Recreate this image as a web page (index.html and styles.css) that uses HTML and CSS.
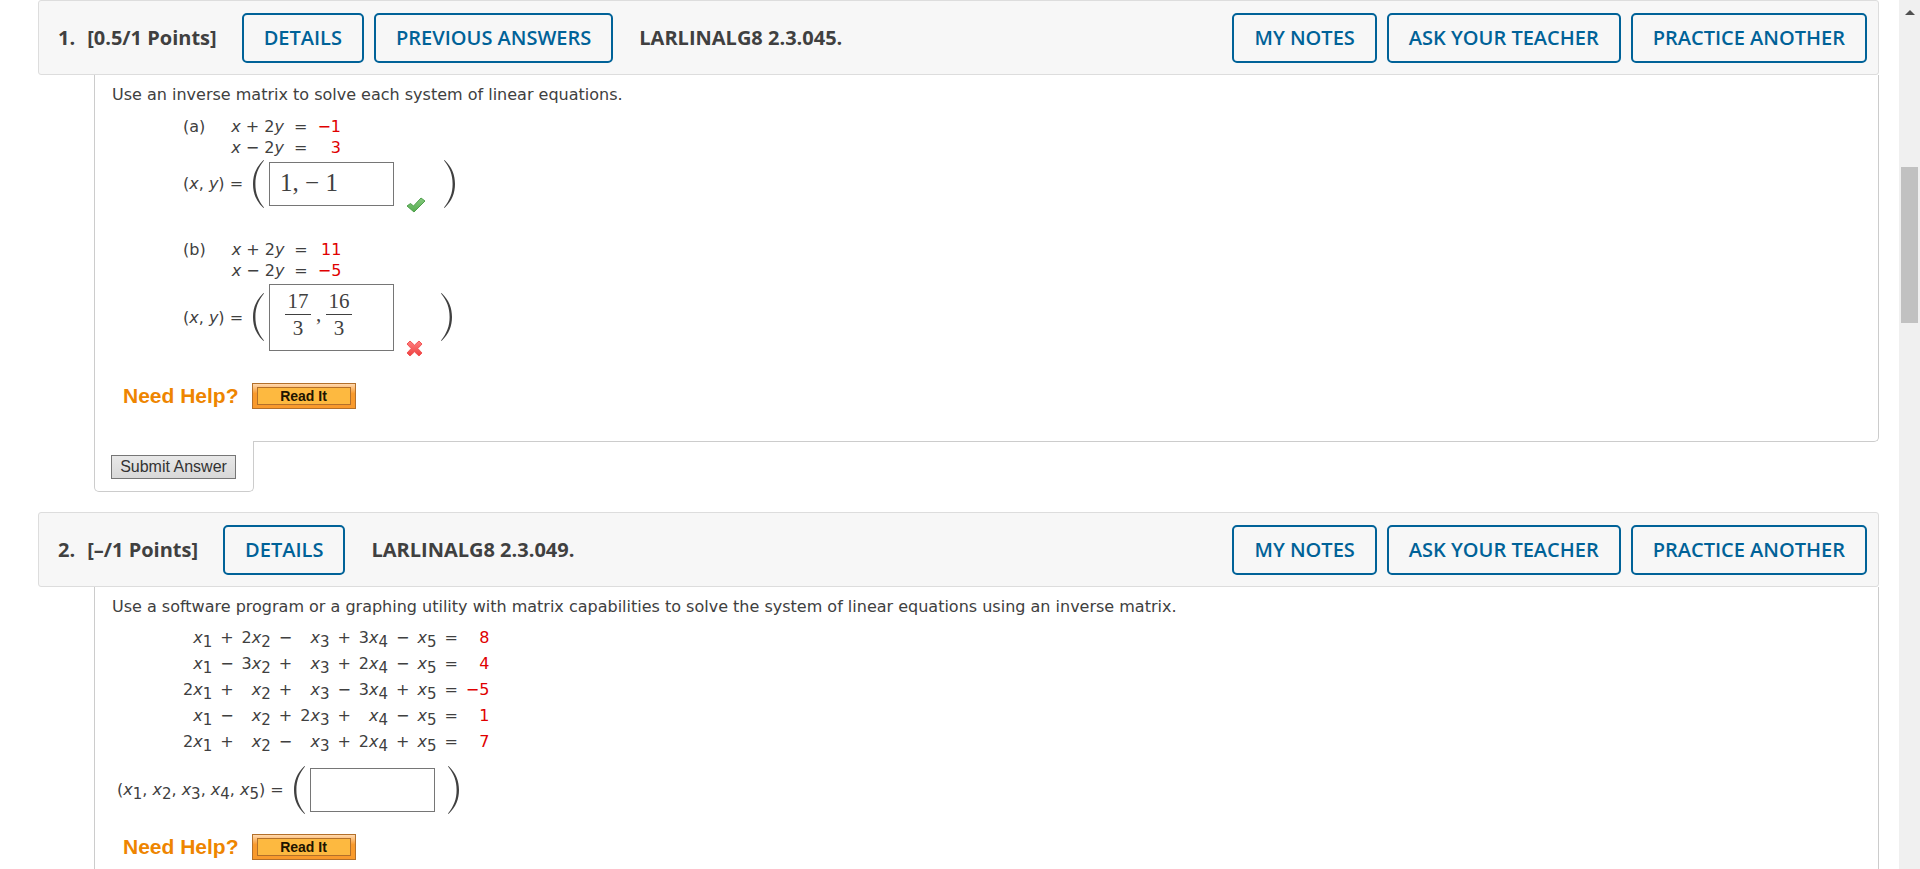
FILE: index.html
```html
<!DOCTYPE html>
<html lang="en">
  <head>
    <meta charset="UTF-8" />
    <meta name="viewport" content="width=device-width, initial-scale=1.0" />
    <title>Assignment</title>
    <link rel="stylesheet" href="styles.css">
  </head>
  <body>
    <svg class="defs" width="0" height="0" aria-hidden="true">
      <defs>
        <symbol id="paren" viewBox="0 0 11 48">
          <path d="M10.5 0C3 7 0 15 0 24s3 17 10.5 24l.5-.6C5 40 2.400 33 2.400 24S5 8 11 .6z" fill="#404040" />
        </symbol>
        <linearGradient id="green" x1="0" y1="0" x2="0" y2="1">
          <stop offset="0" stop-color="#86c97e" />
          <stop offset="1" stop-color="#55ad50" />
        </linearGradient>
        <linearGradient id="red" x1="0" y1="0" x2="0" y2="1">
          <stop offset="0" stop-color="#ff8080" />
          <stop offset="1" stop-color="#ee4040" />
        </linearGradient>
      </defs>
    </svg>

    <div class="page">
      <main class="content">

        <section class="question">
          <header class="bar">
            <h2 class="number">1.</h2>
            <span class="points">[0.5/1 Points]</span>
            <button class="btn" type="button">DETAILS</button>
            <button class="btn" type="button">PREVIOUS ANSWERS</button>
            <span class="code">LARLINALG8 2.3.045.</span>
            <div class="tools">
              <button class="btn" type="button">MY NOTES</button>
              <button class="btn" type="button">ASK YOUR TEACHER</button>
              <button class="btn" type="button">PRACTICE ANOTHER</button>
            </div>
          </header>

          <div class="body">
            <p class="prompt">Use an inverse matrix to solve each system of linear equations.</p>

            <div class="part">
              <div class="given">
                <span>(a)</span>
                <table class="system">
                  <tr><td><i>x</i> + 2<i>y</i></td><td>=</td><td class="val">−1</td></tr>
                  <tr><td><i>x</i> − 2<i>y</i></td><td>=</td><td class="val">3</td></tr>
                </table>
              </div>
              <div class="answer">
                <label for="ans-a">(<i>x</i>, <i>y</i>) =</label>
                <svg class="paren"><use href="#paren" /></svg>
                <input class="field" id="ans-a" type="text" value="1, − 1">
                <svg class="mark" viewBox="0 0 20 16" role="img" aria-label="Correct">
                  <path d="M1 9 4.500 6.500 7.500 9 15 1 19 4 8 15z" fill="url(#green)" stroke="#4f9f4c" stroke-width="1" stroke-linejoin="round" />
                </svg>
                <svg class="paren close"><use href="#paren" /></svg>
              </div>
            </div>

            <div class="part">
              <div class="given">
                <span>(b)</span>
                <table class="system">
                  <tr><td><i>x</i> + 2<i>y</i></td><td>=</td><td class="val">11</td></tr>
                  <tr><td><i>x</i> − 2<i>y</i></td><td>=</td><td class="val">−5</td></tr>
                </table>
              </div>
              <div class="answer tall">
                <span id="lbl-b">(<i>x</i>, <i>y</i>) =</span>
                <svg class="paren"><use href="#paren" /></svg>
                <div class="field math" role="textbox" tabindex="0" contenteditable="true" aria-labelledby="lbl-b">
                  <span class="frac"><span>17</span><span>3</span></span>
                  <span class="comma">,</span>
                  <span class="frac"><span>16</span><span>3</span></span>
                </div>
                <svg class="mark wrong" viewBox="0 0 17 17" role="img" aria-label="Incorrect">
                  <path d="M4 1 8.500 5.200 13 1 16 4 11.800 8.500 16 13 13 16 8.500 11.800 4 16 1 13 5.200 8.500 1 4z" fill="url(#red)" stroke="#f25555" stroke-width="1" stroke-linejoin="round" />
                </svg>
                <svg class="paren close"><use href="#paren" /></svg>
              </div>
            </div>

            <div class="help">
              <strong>Need Help?</strong>
              <button class="read" type="button"><span>Read It</span></button>
            </div>
          </div>
          <div class="submit">
            <button type="button">Submit Answer</button>
          </div>
        </section>

        <section class="question">
          <header class="bar">
            <h2 class="number">2.</h2>
            <span class="points">[–/1 Points]</span>
            <button class="btn" type="button">DETAILS</button>
            <span class="code">LARLINALG8 2.3.049.</span>
            <div class="tools">
              <button class="btn" type="button">MY NOTES</button>
              <button class="btn" type="button">ASK YOUR TEACHER</button>
              <button class="btn" type="button">PRACTICE ANOTHER</button>
            </div>
          </header>

          <div class="body">
            <p class="prompt">Use a software program or a graphing utility with matrix capabilities to solve the system of linear equations using an inverse matrix.</p>

            <table class="system large">
              <tr><td><i>x</i><sub>1</sub></td><td>+</td><td>2<i>x</i><sub>2</sub></td><td>−</td><td><i>x</i><sub>3</sub></td><td>+</td><td>3<i>x</i><sub>4</sub></td><td>−</td><td><i>x</i><sub>5</sub></td><td>=</td><td class="val">8</td></tr>
              <tr><td><i>x</i><sub>1</sub></td><td>−</td><td>3<i>x</i><sub>2</sub></td><td>+</td><td><i>x</i><sub>3</sub></td><td>+</td><td>2<i>x</i><sub>4</sub></td><td>−</td><td><i>x</i><sub>5</sub></td><td>=</td><td class="val">4</td></tr>
              <tr><td>2<i>x</i><sub>1</sub></td><td>+</td><td><i>x</i><sub>2</sub></td><td>+</td><td><i>x</i><sub>3</sub></td><td>−</td><td>3<i>x</i><sub>4</sub></td><td>+</td><td><i>x</i><sub>5</sub></td><td>=</td><td class="val">−5</td></tr>
              <tr><td><i>x</i><sub>1</sub></td><td>−</td><td><i>x</i><sub>2</sub></td><td>+</td><td>2<i>x</i><sub>3</sub></td><td>+</td><td><i>x</i><sub>4</sub></td><td>−</td><td><i>x</i><sub>5</sub></td><td>=</td><td class="val">1</td></tr>
              <tr><td>2<i>x</i><sub>1</sub></td><td>+</td><td><i>x</i><sub>2</sub></td><td>−</td><td><i>x</i><sub>3</sub></td><td>+</td><td>2<i>x</i><sub>4</sub></td><td>+</td><td><i>x</i><sub>5</sub></td><td>=</td><td class="val">7</td></tr>
            </table>

            <div class="answer wide">
              <label for="ans-2">(<i>x</i><sub>1</sub>, <i>x</i><sub>2</sub>, <i>x</i><sub>3</sub>, <i>x</i><sub>4</sub>, <i>x</i><sub>5</sub>) =</label>
              <svg class="paren"><use href="#paren" /></svg>
              <input class="field" id="ans-2" type="text">
              <svg class="paren close"><use href="#paren" /></svg>
            </div>

            <div class="help">
              <strong>Need Help?</strong>
              <button class="read" type="button"><span>Read It</span></button>
            </div>
          </div>
        </section>

      </main>

      <div class="scrollbar" aria-hidden="true">
        <div class="arrow"></div>
        <div class="thumb"></div>
      </div>
    </div>
  </body>
</html>
```

FILE: styles.css
```css
* {
  box-sizing: border-box;
}

body {
  margin: 0;
  background-color: #fff;
  color: #404040;
  font-family: Verdana, "DejaVu Sans", sans-serif;
  font-size: 16px;
  line-height: 21px;
}

.defs {
  position: absolute;
}

.page {
  display: flex;
  height: 100vh;
  overflow: hidden;
}

.content {
  flex: 1;
  padding: 0 20px 0 38px;
}

.question {
  margin-bottom: 20px;
}

/* question header */
.bar {
  display: flex;
  align-items: center;
  height: 75px;
  padding: 0 11px 0 19px;
  background-color: #f7f7f7;
  border: 1px solid #ddd;
  border-radius: 3px;
  font: 700 20px/26px "Open Sans", sans-serif;
}

.number {
  margin: 0 12px 0 0;
  font: inherit;
}

.points {
  margin-right: 25px;
}

.btn {
  height: 50px;
  padding: 0 20px;
  margin-right: 10px;
  background-color: transparent;
  border: 2px solid #006298;
  border-radius: 5px;
  color: #006298;
  font: 600 20px/26px "Open Sans", sans-serif;
}

.code {
  margin-left: 16px;
}

.tools {
  display: flex;
  margin-left: auto;
}

.tools .btn:last-child {
  margin-right: 0;
}

/* question body */
.body {
  margin-left: 56px;
  padding: 9px 17px 32px;
  border: 1px solid #ccc;
  border-top: 0;
  border-radius: 0 0 5px 0;
}

.prompt {
  margin: 0 0 11px;
}

.part {
  margin: 0 0 30px 71px;
}

.given {
  display: flex;
  gap: 26px;
}

.system {
  border-collapse: collapse;
}

.system td {
  padding: 0 0 0 10px;
  text-align: right;
  white-space: nowrap;
}

.system td:first-child {
  padding-left: 0;
}

.system .val {
  color: #e00000;
}

.answer {
  display: flex;
  align-items: center;
  height: 51px;
}

.answer.tall {
  height: 72px;
}

.paren {
  width: 11px;
  height: 48px;
  margin: 0 5px 0 10px;
}

.paren.close {
  margin: 0 0 0 18px;
  transform: scaleX(-1);
}

.field {
  width: 125px;
  height: 44px;
  padding: 0 10px 2px;
  background-color: #fff;
  border: 1px solid #767676;
  border-radius: 0;
  color: #404040;
  font: 25px "Liberation Serif", serif;
}

.math {
  display: flex;
  align-items: center;
  height: 67px;
  padding: 0 15px 6px;
  font-size: 21px;
}

.frac {
  display: flex;
  flex-direction: column;
  width: 26px;
  text-align: center;
  line-height: 26px;
}

.frac span:first-child {
  border-bottom: 1px solid #404040;
}

.comma {
  width: 15px;
  text-align: center;
}

.mark {
  align-self: flex-end;
  width: 20px;
  height: 16px;
  margin: 0 0 -4px 12px;
}

.wrong {
  width: 17px;
  height: 17px;
}

.help {
  display: flex;
  align-items: center;
  gap: 13px;
  padding-left: 11px;
}

.help strong {
  color: #ee8500;
  font: bold 21px/26px "Liberation Sans", Arial, sans-serif;
}

.read {
  width: 104px;
  height: 26px;
  padding: 3px 4px;
  background: linear-gradient(#ffd9b0, #f99a2c 40%, #f99a2c);
  border: 1px solid #b3702a;
}

.read span {
  display: block;
  background-color: #fdb940;
  border: 1px solid #b3702a;
  color: #201400;
  font: bold 14px/16px "Liberation Sans", Arial, sans-serif;
}

.submit {
  width: 160px;
  height: 51px;
  margin: -1px 0 0 56px;
  padding: 14px 16px;
  background-color: #fff;
  border: 1px solid #ccc;
  border-top: 0;
  border-radius: 0 0 5px 5px;
}

.submit button {
  width: 125px;
  height: 24px;
  padding: 0;
  background: linear-gradient(#e8e8e8, #d8d8d8);
  border: 1px solid #767676;
  color: #333;
  font: 16px/20px "Liberation Sans", Arial, sans-serif;
}

/* five variable system */
.large {
  margin: -4px 0 0 71px;
}

.large td {
  height: 26px;
  padding-left: 8px;
}

sub {
  font-size: 15px;
  line-height: 0;
}

.wide {
  margin: 10px 0 19px 5px;
}

.wide .close {
  margin-left: 13px;
}

/* scrollbar */
.scrollbar {
  width: 21px;
  padding: 10px 2px 0;
  background-color: #f0f0f0;
}

.arrow {
  width: 0;
  margin: 0 auto;
  border: 5px solid transparent;
  border-top: 0;
  border-bottom-color: #505050;
}

.thumb {
  height: 156px;
  margin-top: 152px;
  background-color: #c1c1c1;
}
```
